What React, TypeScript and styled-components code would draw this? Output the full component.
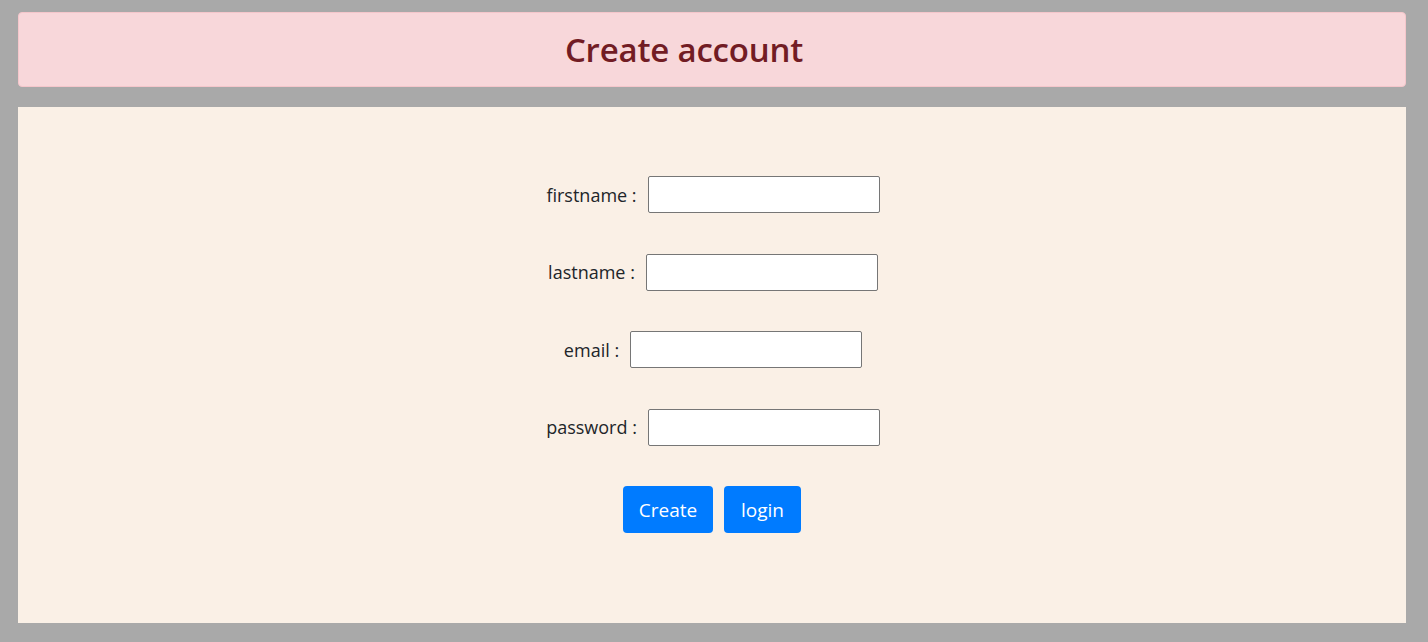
import styled, { createGlobalStyle } from 'styled-components'

const GlobalStyle = createGlobalStyle`
  html, body {
    margin: 0;
    padding: 0;
    background: #a9a9a9;
    font-family: "Open Sans", "Noto Sans", sans-serif;
    color: #212529;
  }
`

const Page = styled.div`
  padding: 12px 22px 20px 18px;
  display: flex;
  flex-direction: column;
  gap: 20px;
`

const Header = styled.div`
  height: 75px;
  box-sizing: border-box;
  background: #f8d7da;
  border: 1px solid #f5c6cb;
  border-radius: 4px;
  display: flex;
  align-items: center;
  justify-content: center;
  padding-right: 56px;
`

const Title = styled.h2`
  margin: 0;
  color: #721c24;
  font-size: 33px;
  font-weight: 600;
  letter-spacing: -0.2px;
`

const Panel = styled.div`
  background: #faf0e6;
  height: 516px;
  box-sizing: border-box;
  padding: 69px 0 0 2px;
  display: flex;
  flex-direction: column;
  align-items: center;
  gap: 40.5px;
`

const Row = styled.div`
  display: flex;
  align-items: center;
  gap: 11px;
  height: 37px;
  font-size: 18px;
`

const Label = styled.label`
  white-space: pre;
`

const Input = styled.input`
  width: 232px;
  height: 37px;
  box-sizing: border-box;
  border: 1px solid #767676;
  border-radius: 2px;
  background: #fff;
  padding: 1px 4px;
  font-size: 16px;
`

const Buttons = styled.div`
  display: flex;
  gap: 11px;
  margin: 0 2px 0 0;
`

const Button = styled.button<{ $w: number }>`
  width: ${(p) => p.$w}px;
  height: 47px;
  border: none;
  border-radius: 4px;
  background: #007bff;
  color: #fff;
  font-family: inherit;
  font-size: 19px;
  padding: 0;
  cursor: pointer;
`

const fields = ['firstname', 'lastname', 'email', 'password']

export default function App() {
  return (
    <>
      <GlobalStyle />
      <Page>
        <Header>
          <Title>Create account</Title>
        </Header>
        <Panel>
          {fields.map((f) => (
            <Row key={f}>
              <Label htmlFor={f}>{f} :</Label>
              <Input id={f} type={f === 'password' ? 'password' : 'text'} />
            </Row>
          ))}
          <Buttons>
            <Button $w={90}>Create</Button>
            <Button $w={77}>login</Button>
          </Buttons>
        </Panel>
      </Page>
    </>
  )
}
